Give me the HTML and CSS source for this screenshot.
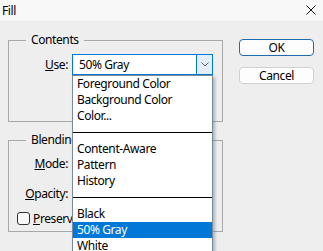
FILE: index.html
```html
<!DOCTYPE html>
<html lang="en">
<head>
    <meta charset="UTF-8">
    <title>Fill</title>
    <link rel="stylesheet" href="styles.css">
</head>
<body>
    <div class="dialog">
        <div class="titlebar">
            <span class="title">Fill</span>
            <svg class="close" width="10" height="10" viewBox="0 0 10 10">
                <path d="M0.5 0.5 L9.5 9.5 M9.5 0.5 L0.5 9.5" stroke="#1a1a1a" stroke-width="1" fill="none"/>
            </svg>
        </div>
        <div class="content">
            <div class="groups">
                <fieldset class="group group-contents">
                    <legend>Contents</legend>
                    <div class="row">
                        <span class="label"><u>U</u>se:</span>
                        <div class="select">
                            <span class="select-value">50% Gray</span>
                            <span class="select-arrow">
                                <svg width="8" height="5" viewBox="0 0 8 5">
                                    <path d="M0.5 0.5 L4 4 L7.5 0.5" stroke="#606060" stroke-width="1" fill="none"/>
                                </svg>
                            </span>
                        </div>
                    </div>
                </fieldset>
                <fieldset class="group group-blending">
                    <legend>Blending</legend>
                    <div class="row">
                        <span class="label"><u>M</u>ode:</span>
                    </div>
                    <div class="row">
                        <span class="label"><u>O</u>pacity:</span>
                    </div>
                    <div class="check-row">
                        <span class="checkbox"></span>
                        <span><u>P</u>reserve Transparency</span>
                    </div>
                </fieldset>
            </div>
            <div class="buttons">
                <button class="btn btn-default">OK</button>
                <button class="btn">Cancel</button>
            </div>
        </div>
        <ul class="dropdown">
            <li>Foreground Color</li>
            <li>Background Color</li>
            <li>Color...</li>
            <li class="sep"></li>
            <li>Content-Aware</li>
            <li>Pattern</li>
            <li>History</li>
            <li class="sep"></li>
            <li>Black</li>
            <li class="selected">50% Gray</li>
            <li>White</li>
        </ul>
    </div>
</body>
</html>
```

FILE: styles.css
```css
html, body {
    margin: 0;
    padding: 0;
}

body {
    font-family: "Noto Sans", "Open Sans", sans-serif;
    font-size: 12px;
    letter-spacing: -0.4px;
    color: #000;
    background-color: #eeeeee;
}

.dialog {
    position: relative;
    width: 323px;
    height: 251px;
    overflow: hidden;
    background-color: #eeeeee;
}

.titlebar {
    height: 21px;
    display: flex;
    align-items: center;
    justify-content: space-between;
    background-color: #f8f8f8;
    padding: 0 7px 0 2px;
}

.title {
    line-height: 16px;
}

.close {
    display: block;
    margin-top: -1px;
}

.content {
    display: flex;
    padding-top: 11px;
}

.groups {
    margin-left: 8px;
    width: 215px;
}

.group {
    margin: 0;
    padding: 0;
    border: 1px solid #a8a8a8;
    min-width: 0;
}

.group legend {
    margin-left: 17px;
    padding: 0 5px;
    line-height: 16px;
}

.group-contents {
    padding-top: 6px;
    padding-bottom: 46px;
}

.group-blending {
    margin-top: 10px;
    padding-top: 5px;
    padding-bottom: 6px;
}

.row {
    display: flex;
    align-items: center;
    height: 21px;
}

.group-blending .row + .row {
    margin-top: 9px;
}

.label {
    width: 59px;
    text-align: right;
    margin-right: 4px;
    flex-shrink: 0;
}

.select {
    width: 141px;
    height: 21px;
    box-sizing: border-box;
    border: 1px solid #0078d7;
    background-color: #fff;
    display: flex;
    align-items: center;
}

.select-value {
    flex: 1;
    padding-left: 6px;
}

.select-arrow {
    width: 16px;
    height: 100%;
    box-sizing: border-box;
    border-left: 1px solid #0078d7;
    background-color: #e2eefa;
    display: flex;
    align-items: center;
    justify-content: center;
}

.select-arrow svg {
    display: block;
}

.check-row {
    display: flex;
    align-items: center;
    height: 14px;
    margin-top: 7px;
    padding-left: 8px;
    white-space: nowrap;
}

.checkbox {
    width: 13px;
    height: 13px;
    box-sizing: border-box;
    border: 1px solid #333;
    border-radius: 3px;
    background-color: #f8f8f8;
    margin-right: 3px;
    flex-shrink: 0;
}

.buttons {
    margin-left: 16px;
    padding-top: 7px;
    display: flex;
    flex-direction: column;
    gap: 11px;
}

.btn {
    width: 75px;
    height: 17px;
    box-sizing: border-box;
    padding: 0;
    font-family: inherit;
    font-size: 12px;
    letter-spacing: -0.4px;
    line-height: 14px;
    color: #000;
    background-color: #fdfdfd;
    border: 1px solid #d0d0d0;
    border-radius: 4px;
}

.btn-default {
    border-color: #1e6bb0;
}

.dropdown {
    position: absolute;
    left: 72px;
    top: 75px;
    width: 141px;
    height: 190px;
    box-sizing: border-box;
    margin: 0;
    padding: 0;
    list-style: none;
    background-color: #fff;
    border: 1px solid #7a8a99;
    box-shadow: 2px 2px 3px rgba(40, 70, 100, 0.35);
    z-index: 2;
}

.dropdown li {
    height: 16px;
    line-height: 16px;
    padding-left: 4px;
    white-space: nowrap;
}

.dropdown li.sep {
    height: 17px;
    padding: 0;
    position: relative;
}

.dropdown li.sep::after {
    content: "";
    position: absolute;
    left: 0;
    right: 0;
    top: 8px;
    height: 1px;
    background-color: #000;
}

.dropdown li.selected {
    background-color: #0078d7;
    color: #fff;
}
```
